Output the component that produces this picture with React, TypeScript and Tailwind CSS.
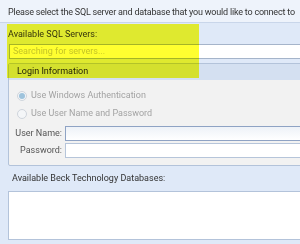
const font = { fontFamily: 'Roboto, "Noto Sans", sans-serif' };

function Radio({ checked, label }: { checked?: boolean; label: string }) {
  return (
    <div className="flex h-[18px] items-center gap-[4px] pl-[8px]">
      <span className="flex h-[10px] w-[10px] items-center justify-center rounded-full border border-[#cfd5dc] bg-[#f4f6f8]">
        {checked ? <span className="h-[6px] w-[6px] rounded-full bg-[#9ec3dc]" /> : null}
      </span>
      <span className="whitespace-nowrap text-[9px] text-[#a3a3a3]">{label}</span>
    </div>
  );
}

export default function App() {
  return (
    <div className="relative h-[244px] w-[300px] overflow-hidden bg-[#dfe9f8] text-[#333]" style={font}>
      <div className="flex h-[23px] items-center border-b border-[#c9d6ea] bg-[#eef3fb] pl-[8px] pt-[4px] text-[9px] tracking-[-0.2px] whitespace-nowrap">
        Please select the SQL server and database that you would like to connect to
      </div>

      <div className="flex flex-col pl-[8px]">
        <div className="mt-[3px] h-[16px] text-[9px] leading-[16px]">Available SQL Servers:</div>
        <div className="ml-px mt-[2px] flex h-[15px] w-[320px] items-center border border-[#a5b4ca] bg-white pl-[3px] text-[9px] text-[#c4c4c4]">
          Searching for servers...
        </div>

        <div className="mt-[4px] flex h-[103px] w-[320px] flex-col overflow-hidden rounded-[2px] border border-[#b3c3da] bg-[#f2f2f2]">
          <div className="flex h-[16px] items-center bg-[#d4e0f1] pl-[8px] text-[9px] text-[#222]">
            Login Information
          </div>
          <div className="flex flex-col pt-[7px]">
            <Radio checked label="Use Windows Authentication" />
            <Radio label="Use User Name and Password" />
            <div className="mt-[3px] flex flex-col gap-[2px]">
              <div className="flex items-center">
                <span className="w-[56px] whitespace-nowrap pr-[3px] text-right text-[9px] text-[#555]">User Name:</span>
                <div className="h-[15px] flex-1 border border-[#8fa3c4] bg-gradient-to-b from-[#eef2f8] to-white" />
              </div>
              <div className="flex items-center">
                <span className="w-[56px] whitespace-nowrap pr-[3px] text-right text-[9px] text-[#555]">Password:</span>
                <div className="h-[15px] flex-1 border border-[#b6c5da] bg-white" />
              </div>
            </div>
          </div>
        </div>

        <div className="mt-[4px] h-[16px] whitespace-nowrap pl-[4px] text-[9px] leading-[16px] text-[#333]">
          Available Beck Technology Databases:
        </div>
        <div className="mt-[5px] h-[49px] w-[320px] border border-[#b3c3da] bg-white" />
      </div>

      <div className="pointer-events-none absolute left-[7px] top-[24px] h-[54px] w-[192px] bg-[#ffff30] mix-blend-multiply" />
    </div>
  );
}
